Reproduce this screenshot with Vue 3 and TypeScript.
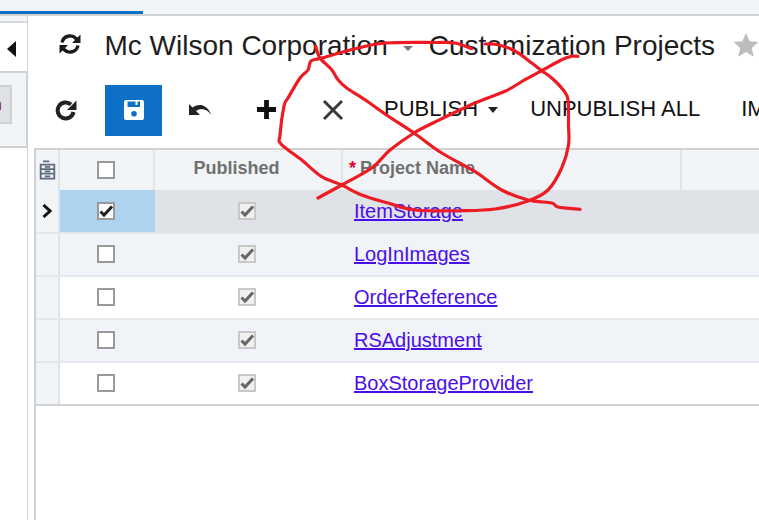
<script setup lang="ts">
interface Row { name: string; checked: boolean }
type Pt = [number, number]
const rows: Row[] = [
  { name: 'ItemStorage', checked: true },
  { name: 'LogInImages', checked: false },
  { name: 'OrderReference', checked: false },
  { name: 'RSAdjustment', checked: false },
  { name: 'BoxStorageProvider', checked: false },
]
function smooth(p: Pt[]): string {
  let d = `M${p[0][0]} ${p[0][1]}`
  for (let i = 0; i < p.length - 1; i++) {
    const a = p[Math.max(i - 1, 0)]
    const b = p[i]
    const c = p[i + 1]
    const e = p[Math.min(i + 2, p.length - 1)]
    const k = 6
    d += ` C${(b[0] + (c[0] - a[0]) / k).toFixed(1)} ${(b[1] + (c[1] - a[1]) / k).toFixed(1)} ${(c[0] - (e[0] - b[0]) / k).toFixed(1)} ${(c[1] - (e[1] - b[1]) / k).toFixed(1)} ${c[0]} ${c[1]}`
  }
  return d
}
const loop = smooth([
  [485, 44], [498, 44.7], [515, 51], [531.7, 63], [541.7, 70.7], [551.7, 78], [563, 89.7], [568, 99.7],
  [568.5, 125], [568.5, 145], [561.7, 168], [548, 190], [528, 201], [495, 209], [461.7, 210.7], [415, 210],
  [388, 203], [361.7, 195], [341.7, 185], [321.7, 176.7], [301.7, 160], [281, 144], [280, 135], [284, 106],
  [288, 98], [300, 78], [308, 70], [311, 61], [321.7, 58], [358, 48], [385, 43], [435, 42.500], [455, 43], [471.7, 48.7],
])
const cross1 = smooth([
  [315.7, 46.3], [320, 58], [331.7, 69.7], [338, 79.7], [346.7, 88], [365, 99.7], [388, 116], [414, 133],
  [441.7, 153], [475, 171.7], [501.7, 190], [528, 200], [551.7, 203], [558, 207], [580, 209.3],
])
const cross2 = smooth([
  [318, 198], [341.7, 185], [371.7, 168], [390, 150], [414, 133], [435, 122], [475, 103], [505, 91.3],
  [525, 79.7], [541.7, 70.7], [561.7, 59.7], [571.7, 56.3], [578, 56.3],
])
</script>

<template>
  <div class="page">
    <div class="topbar"><div class="progress"></div></div>
    <div class="body">
      <aside class="side">
        <div class="side-tab"></div>
        <div class="side-arrow"></div>
        <div class="side-panel"><div class="side-chip"><span>n</span></div></div>
      </aside>
      <main class="main">
        <div class="title-row">
          <svg class="sync" viewBox="0 0 24 24" width="24" height="24" fill="none" stroke="#1a1a1a" stroke-width="3.4">
            <path d="M4 10.500 a8.200 8.200 0 0 1 14-4 L20 8.500" />
            <path d="M20 13.500 a8.200 8.200 0 0 1 -14 4 L4 15.500" />
            <path d="M22.500 2.500 V11 H14 Z M1.500 21.500 V13 H10 Z" fill="#1a1a1a" stroke="none" />
          </svg>
          <span class="company">Mc Wilson Corporation</span>
          <span class="caret grey"></span>
          <span class="screen">Customization Projects</span>
          <svg class="star" viewBox="0 0 24 24" width="26" height="26"><path d="M12 1 L15.300 8.500 L23.500 9.300 L17.300 14.700 L19.200 22.800 L12 18.500 L4.800 22.800 L6.700 14.700 L.5 9.300 L8.700 8.500 Z" fill="#bdbdbd" /></svg>
        </div>
        <div class="toolbar">
          <button class="tool tool-refresh" type="button">
            <svg viewBox="0 0 24 24" width="24" height="24" fill="none" stroke="#222" stroke-width="4"><path d="M19.500 14 A8 8 0 1 1 17 6.500" /><path d="M22.500 2.500 V12 H13 Z" fill="#222" stroke="none" /></svg>
          </button>
          <button class="tool tool-save" type="button">
            <svg viewBox="0 0 22 22" width="22" height="22"><path fill-rule="evenodd" d="M1 3 a2 2 0 0 1 2-2 H19 a2 2 0 0 1 2 2 V19 a2 2 0 0 1 -2 2 H3 a2 2 0 0 1 -2-2 Z M4.500 2.500 V8 H17 V2.500 H14.500 V6 H12.500 V2.500 Z" fill="#fff" /><circle cx="11" cy="14.800" r="2.800" fill="#0e6fc6" /></svg>
          </button>
          <button class="tool tool-undo" type="button">
            <svg viewBox="0 0 24 16" width="24" height="16"><path d="M1 2 L4.500 5.500 C9 2 18 0 23.500 13 C19 7 13 5 8 9 L12 13 H1 Z" fill="#222" /></svg>
          </button>
          <button class="tool tool-plus" type="button">
            <svg viewBox="0 0 22 22" width="21" height="21"><path d="M8.500 1 H13.500 V8.500 H21 V13.500 H13.500 V21 H8.500 V13.500 H1 V8.500 H8.500 Z" fill="#111" /></svg>
          </button>
          <button class="tool tool-close" type="button">
            <svg viewBox="0 0 22 22" width="22" height="22" stroke="#3a3a3a" stroke-width="3"><path d="M2 2 L20 20 M20 2 L2 20" /></svg>
          </button>
          <span class="action action-publish">PUBLISH<span class="caret dark"></span></span>
          <span class="action action-unpublish">UNPUBLISH ALL</span>
          <span class="action">IMPORT</span>
        </div>
        <div class="grid">
          <div class="grow head">
            <div class="c c-ind">
              <svg viewBox="0 0 18 22" width="17" height="20" fill="none" stroke="#5f6b7e" stroke-width="2"><path d="M4 1.500 H11 M1.500 5 H16.500 V20.500 H1.500 Z M1.500 10 H16.500 M1.500 15 H16.500 M6 7.500 H12 M6 12.500 H12 M6 18 H12" /></svg>
            </div>
            <div class="c c-sel"><span class="box"></span></div>
            <div class="c c-pub head-text">Published</div>
            <div class="c c-name head-text"><span class="req">*</span>Project Name</div>
            <div class="c c-rest"></div>
          </div>
          <div v-for="(r, i) in rows" :key="r.name" class="grow" :class="{ active: i === 0, alt: i % 2 === 1, plain: i > 0 }">
            <div class="c c-ind">
              <svg v-if="i === 0" viewBox="0 0 10 14" width="10" height="14"><path d="M1.500 1 L8 7 L1.500 13" fill="none" stroke="#111" stroke-width="3" /></svg>
            </div>
            <div class="c c-sel">
              <span class="box">
                <svg v-if="r.checked" viewBox="0 0 16 16" width="16" height="16"><path d="M2.500 8.500 L6 12 L14 3.500" fill="none" stroke="#222" stroke-width="3" /></svg>
              </span>
            </div>
            <div class="c c-pub">
              <span class="box on">
                <svg viewBox="0 0 16 16" width="16" height="16"><path d="M2.500 8.500 L6 12 L14 3.500" fill="none" stroke="#666" stroke-width="3" /></svg>
              </span>
            </div>
            <div class="c c-name"><a class="link" href="#">{{ r.name }}</a></div>
            <div class="c c-rest"></div>
          </div>
        </div>
      </main>
    </div>
    <svg class="scribble" viewBox="0 0 759 520" width="759" height="520" fill="none" stroke="#ed1c24" stroke-width="3.200" stroke-linejoin="round" stroke-linecap="round">
      <path :d="loop" />
      <path :d="cross1" />
      <path :d="cross2" />
    </svg>
  </div>
</template>

<style scoped>
.page { position: relative; width: 759px; height: 520px; overflow: hidden; background: #fff; font-family: "Liberation Sans", Arial, sans-serif; color: #111; }
.topbar { height: 14px; background: #f2f5f7; border-bottom: 2px solid #d0d1d3; box-sizing: content-box; display: flex; align-items: flex-end; }
.progress { width: 143px; height: 3px; background: #0e6fc6; }
.body { display: flex; height: 504px; }
.side { width: 28px; flex: none; box-sizing: border-box; border-right: 1px solid #d0d1d3; display: flex; flex-direction: column; }
.side-tab { height: 7px; background: #f2f5f7; border: solid #d8d9db; border-width: 0 0 2px 0; box-sizing: border-box; }
.side-arrow { height: 48px; display: flex; align-items: center; }
.side-arrow::before { content: ""; margin-left: 7px; margin-top: 3px; border: solid transparent; border-width: 8px 9px 8px 0; border-right-color: #111; }
.side-panel { height: 77px; box-sizing: border-box; border: solid #d0d1d3; border-width: 2px 1px 2px 0; background: #f2f5f7; padding-top: 12px; }
.side-chip { width: 12px; height: 39px; background: #dfe1e5; border: solid #d0d1d3; border-width: 2px 2px 2px 0; box-sizing: border-box; overflow: hidden; font-size: 16px; line-height: 35px; color: #a01020; }
.side-chip span { display: block; margin-left: -7px; }
.main { flex: 1; min-width: 0; padding-left: 7px; display: flex; flex-direction: column; }
.title-row { height: 69px; box-sizing: border-box; padding-bottom: 9px; display: flex; align-items: center; white-space: nowrap; flex: none; }
.sync { margin: -5px 23px 0; flex: none; }
.company, .screen { font-size: 28px; color: #1d1d1d; }
.company { margin-left: -0.5px; }
.caret { display: inline-block; border: solid transparent; flex: none; }
.caret.grey { border-width: 5px 5px 0; border-top-color: #777; margin: 5px 16px 0 15px; }
.caret.dark { border-width: 6px 5.500px 0; border-top-color: #222; margin: 2px 0 0 10px; }
.star { margin: -3px 0 0 18px; flex: none; }
.toolbar { height: 51px; display: flex; align-items: center; white-space: nowrap; flex: none; }
.tool { border: 0; padding: 0 0 2px; background: none; height: 51px; display: flex; align-items: center; justify-content: center; flex: none; width: 57px; box-sizing: border-box; }
.tool-refresh { width: 70px; padding-right: 8px; }
.tool-save { background: #0e6fc6; padding-bottom: 1px; }
.tool-undo { width: 67px; padding-left: 8px; }
.tool-plus { width: 64px; padding-left: 10px; }
.tool-close { width: 68px; padding-left: 11px; }
.action { font-size: 22px; color: #111; margin-bottom: 4px; flex: none; }
.action-publish { margin-left: 23px; margin-right: 32px; display: inline-flex; align-items: center; }
.action-unpublish { margin-right: 41px; }
.grid { margin: 12px -40px 0 -1px; border-top: 2px solid #d0d1d3; border-left: 2px solid #d0d1d3; flex: 1; }
.grow { display: flex; height: 43px; box-sizing: border-box; border-bottom: 2px solid #e4e7eb; }
.grow.head { height: 40px; background: #f2f5f7; border-bottom: 0; }
.grow.active { height: 44px; background: #dfe2e6; }
.grow:last-child { border-bottom-color: #d0d1d3; }
.grow.alt { background: #f0f3f8; }
.c { display: flex; align-items: center; justify-content: center; box-sizing: border-box; flex: none; height: 100%; }
.c-ind { width: 24px; background: #f2f5f7; border-right: 2px solid #dfe2e6; }
.c-sel { width: 95px; border-right: 2px solid transparent; padding-right: 1px; }
.head .c-sel, .head .c-pub, .head .c-name { border-right: 2px solid #e1e4e8; }
.active .c-sel { background: #aed3ee; border-right: 0; padding-right: 3px; }
.c-pub { width: 188px; padding-right: 5px; }
.plain .c-sel, .plain .c-pub { padding-bottom: 1px; }
.head .c-pub { padding-right: 23px; }
.c-name { width: 339px; justify-content: flex-start; padding-left: 11px; }
.head .c-name { padding-left: 6px; }
.c-rest { flex: 1; }
.box { width: 18px; height: 18px; box-sizing: border-box; border: 2px solid #9a9a9a; background: #fff; display: flex; align-items: center; justify-content: center; }
.box.on { background: #f0f0f0; border-color: #c8c8c8; }
.box svg { flex: none; }
.head-text { font-size: 18px; font-weight: 700; color: #707070; padding-bottom: 4px; }
.req { color: #e0002a; margin-right: 4px; font-weight: 700; }
.link { font-size: 20px; color: #4a0fe8; text-decoration: underline; }
.scribble { position: absolute; left: 0; top: 0; pointer-events: none; }
</style>
